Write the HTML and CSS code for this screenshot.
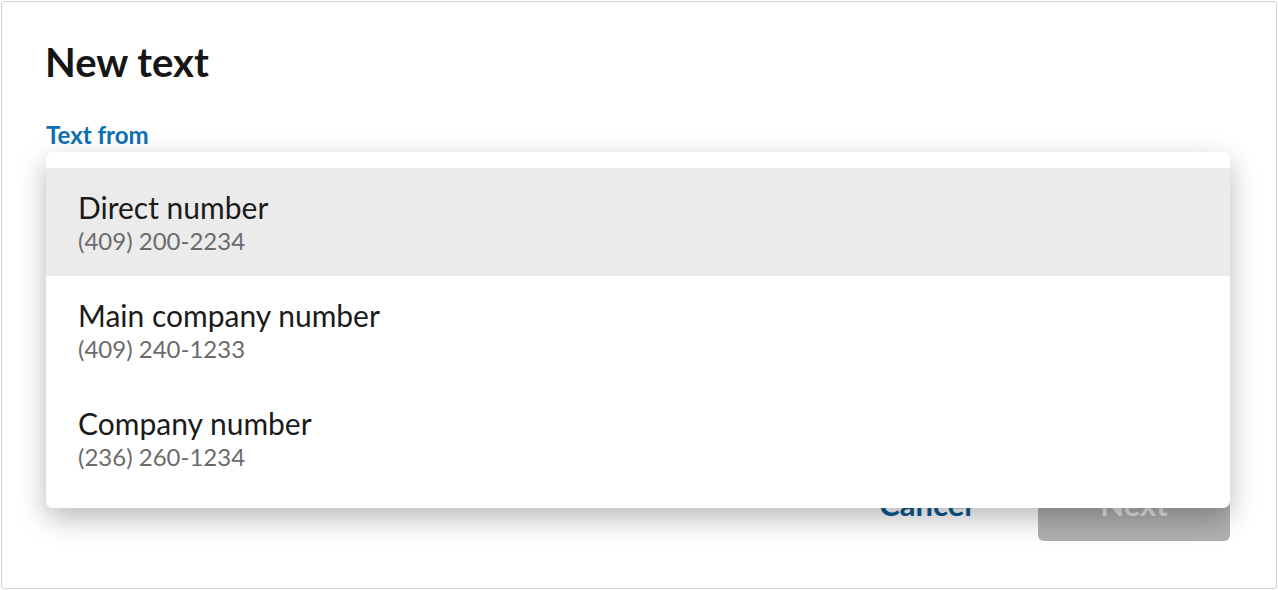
FILE: index.html
```html
<!DOCTYPE html>
<html lang="en">
<head>
<meta charset="utf-8">
<title>New text</title>
<link rel="stylesheet" href="styles.css">
</head>
<body>
<div class="dialog">
  <h1 class="title">New text</h1>
  <div class="field">
    <label class="label">Text from</label>
    <div class="select"></div>
    <ul class="menu">
      <li class="option active">
        <span class="opt-name">Direct number</span>
        <span class="opt-num">(409) 200-2234</span>
      </li>
      <li class="option">
        <span class="opt-name">Main company number</span>
        <span class="opt-num">(409) 240-1233</span>
      </li>
      <li class="option">
        <span class="opt-name">Company number</span>
        <span class="opt-num">(236) 260-1234</span>
      </li>
    </ul>
  </div>
  <div class="spacer"></div>
  <div class="footer">
    <button class="btn btn-cancel">Cancel</button>
    <button class="btn btn-next" disabled>Next</button>
  </div>
</div>
</body>
</html>
```
FILE: styles.css
```css
html, body {
  margin: 0;
  padding: 0;
  background: #ffffff;
}
body {
  font-family: Lato, "Open Sans", sans-serif;
}
.dialog {
  box-sizing: border-box;
  margin: 1px;
  width: 1276px;
  height: 588px;
  border: 1px solid #d2d2d2;
  border-radius: 3px;
  padding: 36px 46px 47px 44px;
  display: flex;
  flex-direction: column;
  background: #fff;
}
.title {
  margin: 0 0 0 -1px;
  font-size: 40px;
  line-height: 48px;
  font-weight: 700;
  color: #161616;
}
.field {
  position: relative;
  margin-top: 35px;
  display: flex;
  flex-direction: column;
}
.label {
  font-size: 24px;
  line-height: 28px;
  font-weight: 700;
  color: #0d70b3;
}
.select {
  margin-top: 8px;
  height: 56px;
  border: 1px solid #8a8a8a;
  border-radius: 6px;
}
.menu {
  position: absolute;
  top: 31px;
  left: 0;
  right: 0;
  margin: 0;
  padding: 16px 0;
  list-style: none;
  background: #fff;
  border-radius: 7px;
  box-shadow: 0 10px 28px rgba(0, 0, 0, 0.28);
  z-index: 2;
}
.option {
  height: 108px;
  box-sizing: border-box;
  padding: 21px 32px 0;
  display: flex;
  flex-direction: column;
}
.option.active {
  background: #ebebeb;
}
.opt-name {
  font-size: 30px;
  line-height: 36px;
  color: #1b1b1b;
}
.opt-num {
  font-size: 24px;
  line-height: 32px;
  color: #6b6b6b;
}
.spacer {
  flex: 1;
}
.footer {
  display: flex;
  justify-content: flex-end;
  align-items: center;
  gap: 34px;
}
.btn {
  font-family: Lato, "Open Sans", sans-serif;
  font-size: 31px;
  font-weight: 700;
  height: 64px;
  border: none;
  border-radius: 6px;
  background: none;
  padding: 0 32px 10px;
}
.btn-cancel {
  color: #0b5b92;
}
.btn-next {
  width: 192px;
  background: #b0b0b0;
  color: #e4e4e4;
}
```
